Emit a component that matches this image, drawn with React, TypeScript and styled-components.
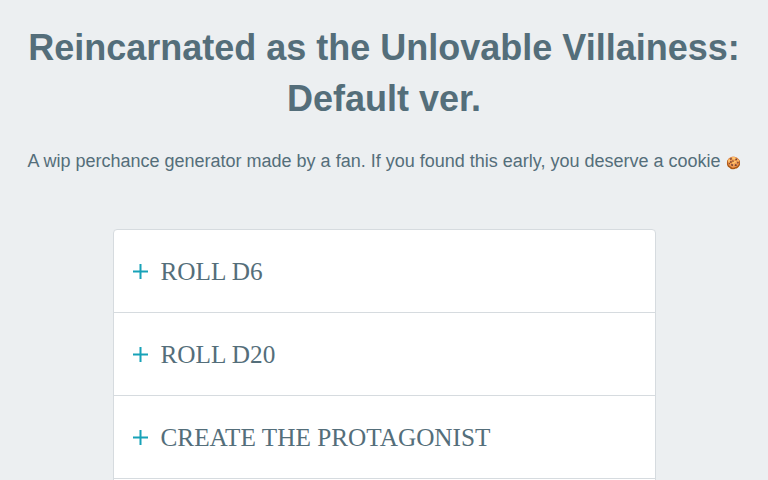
import React from "react";
import styled, { createGlobalStyle } from "styled-components";

const Global = createGlobalStyle`
  html, body { margin: 0; padding: 0; background: #eceff1; }
  body { font-family: "Liberation Sans", Arial, sans-serif; color: #546e7a; }
`;

const Page = styled.main`
  display: flex;
  flex-direction: column;
  align-items: center;
  padding: 22px 16px 0;
`;

const Title = styled.h1`
  margin: 0;
  font-size: 36px;
  font-weight: 700;
  line-height: 51px;
  text-align: center;
  color: #546e7a;
`;

const Subtitle = styled.p`
  margin: 25px 0 0;
  height: 24px;
  font-size: 18px;
  line-height: 24px;
  text-align: center;
  color: #546e7a;
`;

const Cookie = styled.span`
  font-size: 12px;
  line-height: 0;
`;

const Accordion = styled.div`
  margin-top: 56px;
  width: 543px;
  box-sizing: border-box;
  background: #fff;
  border: 1px solid #d6dbdf;
  border-radius: 4px;
`;

const Item = styled.div`
  border-bottom: 1px solid #d6dbdf;
  &:last-child { border-bottom: none; }
`;

const Header = styled.button`
  display: flex;
  align-items: center;
  gap: 12px;
  width: 100%;
  height: 82px;
  padding: 0 18px;
  border: none;
  background: transparent;
  cursor: pointer;
  font-family: "Liberation Serif", "Times New Roman", serif;
  font-size: 25.25px;
  color: #546e7a;
  text-align: left;
`;

const Plus = () => (
  <svg width="17" height="17" viewBox="0 0 17 17" aria-hidden="true">
    <path d="M8.5 1v15M1 8.5h15" stroke="#17a2b8" strokeWidth="2" fill="none" />
  </svg>
);

const items = ["ROLL D6", "ROLL D20", "CREATE THE PROTAGONIST", "CREATE THE VILLAINESS"];

export default function App() {
  return (
    <>
      <Global />
      <Page>
        <Title>
          Reincarnated as the Unlovable Villainess:
          <br />
          Default ver.
        </Title>
        <Subtitle>
          A wip perchance generator made by a fan. If you found this early, you deserve a cookie{" "}
          <Cookie>🍪</Cookie>
        </Subtitle>
        <Accordion>
          {items.map((t) => (
            <Item key={t}>
              <Header>
                <Plus />
                <span>{t}</span>
              </Header>
            </Item>
          ))}
        </Accordion>
      </Page>
    </>
  );
}
